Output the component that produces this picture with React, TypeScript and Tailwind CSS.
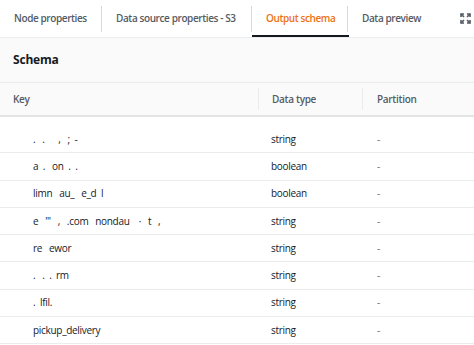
const rows = [
  { key: '.   .      ,   ;  -', type: 'string' },
  { key: 'a  .   on  .  .', type: 'boolean' },
  { key: 'limn   au_   e_d  l', type: 'boolean' },
  { key: 'e   \'"   ,   .com   nondau    ·   t   ,', type: 'string' },
  { key: 're   ewor', type: 'string' },
  { key: '.   .  .  rm', type: 'string' },
  { key: '.  lfil.', type: 'string' },
  { key: 'pickup_delivery', type: 'string' },
];

const tabs = [
  { label: 'Node properties', w: 'w-[101px]' },
  { label: 'Data source properties - S3', w: 'w-[150px]' },
  { label: 'Output schema', w: 'w-[96px]' },
  { label: 'Data preview', w: 'w-[90px]' },
];

function ExpandIcon() {
  return (
    <svg width="11" height="11" viewBox="0 0 11 11" fill="none" stroke="#545b64" strokeWidth="1.6">
      <path d="M1 4V1h3M7 1h3v3M10 7v3H7M4 10H1V7" />
      <path d="M1 1l3 3M10 1L7 4M10 10L7 7M1 10l3-3" />
    </svg>
  );
}

export default function App() {
  return (
    <div className="w-[474px] h-[345px] overflow-hidden bg-white text-[#16191f]" style={{ fontFamily: '"Open Sans", "Noto Sans", sans-serif' }}>
      <div className="flex items-stretch h-[38px] border-b border-[#eaeded] bg-white">
        {tabs.map((t, i) => (
          <div key={t.label} className={'flex items-center shrink-0 ' + t.w}>
            {i > 0 && <div className="w-px h-[26px] bg-[#d5dbdb] shrink-0" />}
            <div
              className={
                'h-full flex-1 flex items-center px-[14px] text-[10px] font-semibold tracking-[-0.4px] whitespace-nowrap ' +
                (t.label === 'Output schema' ? 'text-[#ec7211] border-b-2 border-[#16191f] pt-[2px]' : 'text-[#545b64]')
              }
            >
              {t.label}
            </div>
          </div>
        ))}
        <div className="ml-auto flex items-center pr-[3px]">
          <ExpandIcon />
        </div>
      </div>
      <div className="bg-[#fafafa]">
        <div className="h-[45px] flex items-center px-[13px] border-b border-[#eaeded]">
          <span className="text-[12px] font-bold tracking-[-0.2px]">Schema</span>
        </div>
        <div className="grid grid-cols-[258px_104px_1fr] h-[34px] items-center text-[10px] font-semibold tracking-[-0.3px] text-[#545b64] border-b-2 border-[#e3e5e5]">
          <div className="pl-[13px]">Key</div>
          <div className="pl-[13px] border-l border-[#eaeded] h-[22px] flex items-center">Data type</div>
          <div className="pl-[14px] border-l border-[#eaeded] h-[22px] flex items-center">Partition</div>
        </div>
      </div>
      <div className="pt-[9px]">
        {rows.map((r, i) => (
          <div key={i} className="grid grid-cols-[258px_104px_1fr] h-[27.3px] items-center text-[10px] tracking-[-0.3px] text-[#16191f] border-b border-[#eaeded]">
            <div className="pl-[33px] whitespace-pre">{r.key}</div>
            <div className="pl-[13px]">{r.type}</div>
            <div className="pl-[15px] text-[#687078]">-</div>
          </div>
        ))}
      </div>
    </div>
  );
}
